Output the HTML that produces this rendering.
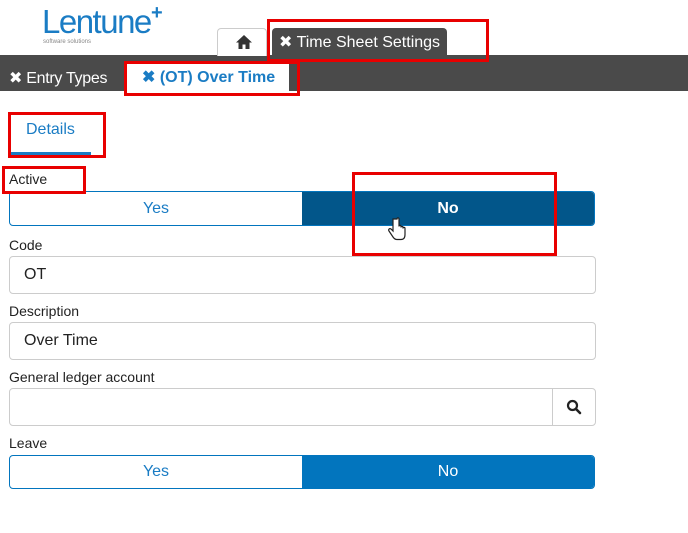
<!DOCTYPE html><html><head><style>
body{margin:0;width:688px;height:533px;background:#fff;font-family:"Liberation Sans",sans-serif;position:relative;overflow:hidden}
.a{position:absolute}
.rb{position:absolute;border:3px solid #e80000;box-sizing:border-box}
.lbl{position:absolute;left:9px;font-size:14px;color:#222}
.inp{position:absolute;left:9px;width:587px;border:1px solid #ccc;border-radius:4px;box-sizing:border-box;font-size:16px;color:#222;padding-left:14px}
.tg{position:absolute;left:9px;width:586px;height:35px;box-sizing:border-box;border:1px solid #0275be;border-radius:4px;overflow:hidden;display:flex;font-size:16px}
.tg div{flex:1;display:flex;align-items:center;justify-content:center}
</style></head><body>
<div class="a" style="left:42px;top:3px;font-size:33px;color:#1a7cc4;letter-spacing:-1.5px">Lentune</div>
<div class="a" style="left:151px;top:2px;font-size:20px;font-weight:bold;color:#1a7cc4">+</div>
<div class="a" style="left:43px;top:39px;font-size:6px;color:#888">software solutions</div>
<div class="a" style="left:0;top:55px;width:688px;height:36px;background:#4a4a4a"></div>
<div class="a" style="left:217px;top:28px;width:50px;height:28px;background:#fff;border:1px solid #ccc;border-bottom:none;border-radius:4px 4px 0 0;box-sizing:border-box"></div>
<svg class="a" style="left:235px;top:34px" width="18" height="16" viewBox="0 0 18 16"><path d="M9 1L1 8.5h2.5V15h4v-4.5h3V15h4V8.5H17z" fill="#333"/></svg>
<div class="a" style="left:272px;top:28px;width:175px;height:28px;background:#4a4a4a;border-radius:4px 4px 0 0;color:#fff;font-size:16px;line-height:30px;padding-left:7px;box-sizing:border-box">✖ Time Sheet Settings</div>
<div class="a" style="left:9px;top:68px;color:#fff;font-size:16px;letter-spacing:-0.3px">✖ Entry Types</div>
<div class="a" style="left:126px;top:64px;width:163px;height:27px;background:#fff;color:#1a7cc4;font-size:16px;font-weight:bold;line-height:27px;padding-left:16px;box-sizing:border-box">✖ (OT) Over Time</div>
<div class="a" style="left:26px;top:121px;color:#1a7cc4;font-size:16px">Details</div>
<div class="a" style="left:10px;top:152px;width:81px;height:3px;background:#1a7cc4"></div>
<div class="lbl" style="top:171px">Active</div>
<div class="tg" style="top:191px"><div style="color:#1a7cc4">Yes</div><div style="background:#02568a;color:#fff;font-weight:bold">No</div></div>
<div class="lbl" style="top:237px">Code</div>
<div class="inp" style="top:256px;height:38px;line-height:36px">OT</div>
<div class="lbl" style="top:303px">Description</div>
<div class="inp" style="top:322px;height:38px;line-height:36px">Over Time</div>
<div class="lbl" style="top:369px">General ledger account</div>
<div class="inp" style="top:388px;height:38px"></div>
<div class="a" style="left:552px;top:388px;width:1px;height:38px;background:#ccc"></div>
<svg class="a" style="left:566px;top:399px" width="16" height="16" viewBox="0 0 16 16"><circle cx="6.5" cy="6.5" r="4.5" fill="none" stroke="#222" stroke-width="2.2"/><path d="M10 10l4 4" stroke="#222" stroke-width="2.6" stroke-linecap="round"/></svg>
<div class="lbl" style="top:435px">Leave</div>
<div class="tg" style="top:455px;height:34px"><div style="color:#1a7cc4">Yes</div><div style="background:#0275be;color:#fff">No</div></div>
<svg class="a" style="left:388px;top:217px" width="20" height="26" viewBox="0 0 20 26"><path d="M5 2v12l-2-2c-1.5-1-3 .5-2 2l4 6c1 1.5 2 2.5 4 2.5h4c3 0 4-2 4-5v-6c0-1.5-2-1.5-2 0v-1c0-1.5-2-1.5-2 0v-1c0-1.5-2-1.5-2 0V2c0-1.5-2-1.5-2 0z" fill="#fff" stroke="#222" stroke-width="1.2"/></svg>
<div class="rb" style="left:267px;top:19px;width:222px;height:43px"></div>
<div class="rb" style="left:124px;top:61px;width:176px;height:35px"></div>
<div class="rb" style="left:8px;top:112px;width:98px;height:46px"></div>
<div class="rb" style="left:2px;top:166px;width:84px;height:28px"></div>
<div class="rb" style="left:352px;top:172px;width:205px;height:84px"></div>
</body></html>
